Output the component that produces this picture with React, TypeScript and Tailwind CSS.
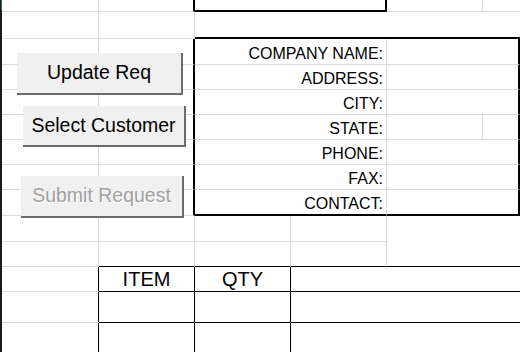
import React from 'react';

const grid = 'border-[#dadada]';

interface CellProps {
    className?: string;
    children?: React.ReactNode;
}

const Cell: React.FC<CellProps> = ({ className = '', children }) => (
    <div className={`min-w-0 min-h-0 ${className}`}>{children}</div>
);

const Label: React.FC<{ text: string; last?: boolean }> = ({ text, last }) => (
    <Cell
        className={`col-span-2 flex items-end justify-end pr-[3px] pb-[2px] text-[16px] leading-none border-r ${grid} ${
            last ? 'border-b-2 border-b-black' : 'border-b'
        }`}
    >
        {text}
    </Cell>
);

const SheetButton: React.FC<{ label: string; className: string; disabled?: boolean }> = ({ label, className, disabled }) => (
    <button
        type="button"
        className={`absolute flex items-center justify-center bg-[#f0f0f0] border-r-2 border-b-2 border-[#6b6b6b] text-[19.5px] leading-none ${
            disabled ? 'text-[#a0a0a0] [text-shadow:1px_1px_0_#ffffff]' : 'text-black'
        } ${className}`}
    >
        {label}
    </button>
);

const App: React.FC = () => {
    const fields = ['COMPANY NAME:', 'ADDRESS:', 'CITY:', 'STATE:', 'PHONE:', 'FAX:', 'CONTACT:'];

    return (
        <div className="relative w-[520px] h-[352px] overflow-hidden bg-white font-['Liberation_Sans',Arial,sans-serif] text-black">
            <div className="grid grid-cols-[2px_97px_96px_96px_96px_96px_37px] grid-rows-[12px_27px_26px_25px_25px_25px_25px_25px_26px_26px_25px_25px_31px_40px]">
                {/* frozen pane edge */}
                <div className="col-start-1 row-start-1 row-span-14 bg-[#1b1b1b] flex justify-end">
                    <div className="w-px h-[10px] bg-[#217346]" />
                </div>

                {/* row 1 */}
                <Cell className={`border-r border-b ${grid}`} />
                <Cell className={`border-b ${grid} border-r-2 border-r-black`} />
                <Cell className="col-span-2 border-r-2 border-b-2 border-black" />
                <Cell className={`border-r border-b ${grid}`} />
                <Cell className={`border-b ${grid}`} />

                {/* row 2 */}
                <Cell className={`border-r border-b ${grid}`} />
                <Cell className={`border-r border-b ${grid}`} />
                <Cell className="col-span-4 border-b-2 border-black" />

                {/* company box */}
                {fields.map((f, i) => {
                    const last = i === fields.length - 1;
                    const bottom = last ? 'border-b-2 border-b-black' : `border-b ${grid}`;
                    return (
                        <React.Fragment key={f}>
                            <Cell className={`border-r border-b ${grid}`} />
                            <Cell className={`border-b ${grid} border-r-2 border-r-black`} />
                            <Label text={f} last={last} />
                            {f === 'STATE:' ? (
                                <>
                                    <Cell className={`border-r border-b ${grid}`} />
                                    <Cell className={`border-b ${grid} border-r-2 border-r-black`} />
                                </>
                            ) : (
                                <Cell className={`col-span-2 border-r-2 border-r-black ${bottom}`} />
                            )}
                        </React.Fragment>
                    );
                })}

                {/* gap rows */}
                <Cell className={`border-r border-b ${grid}`} />
                <Cell className={`border-r border-b ${grid}`} />
                <Cell className={`border-r border-b ${grid}`} />
                <Cell className={`border-r border-b ${grid}`} />
                <Cell className="col-span-2 row-span-2 border-b border-black" />

                <Cell className={`border-r border-b ${grid}`} />
                <Cell className={`border-r ${grid} border-b border-b-black`} />
                <Cell className={`border-r ${grid} border-b border-b-black`} />
                <Cell className={`border-r ${grid} border-b border-b-black`} />

                {/* item table */}
                <Cell className={`border-b ${grid} border-r border-r-black`} />
                <Cell className="flex items-end justify-center pb-[2px] text-[20px] leading-none border-r border-b border-black">
                    ITEM
                </Cell>
                <Cell className="flex items-end justify-center pb-[2px] text-[20px] leading-none border-r border-b border-black">
                    QTY
                </Cell>
                <Cell className="col-span-3 border-b border-black" />

                <Cell className={`border-b ${grid} border-r border-r-black`} />
                <Cell className="border-r border-b border-black" />
                <Cell className="border-r border-b border-black" />
                <Cell className="col-span-3 border-b border-black" />

                <Cell className={`border-b ${grid} border-r border-r-black`} />
                <Cell className="border-r border-b border-black" />
                <Cell className="border-r border-b border-black" />
                <Cell className="col-span-3 border-b border-black" />
            </div>

            <SheetButton label="Update Req" className="left-[17px] top-[53px] w-[166px] h-[42px]" />
            <SheetButton label="Select Customer" className="left-[23px] top-[106px] w-[163px] h-[41px]" />
            <SheetButton label="Submit Request" className="left-[21px] top-[176px] w-[163px] h-[42px]" disabled />
        </div>
    );
};

export default App;
